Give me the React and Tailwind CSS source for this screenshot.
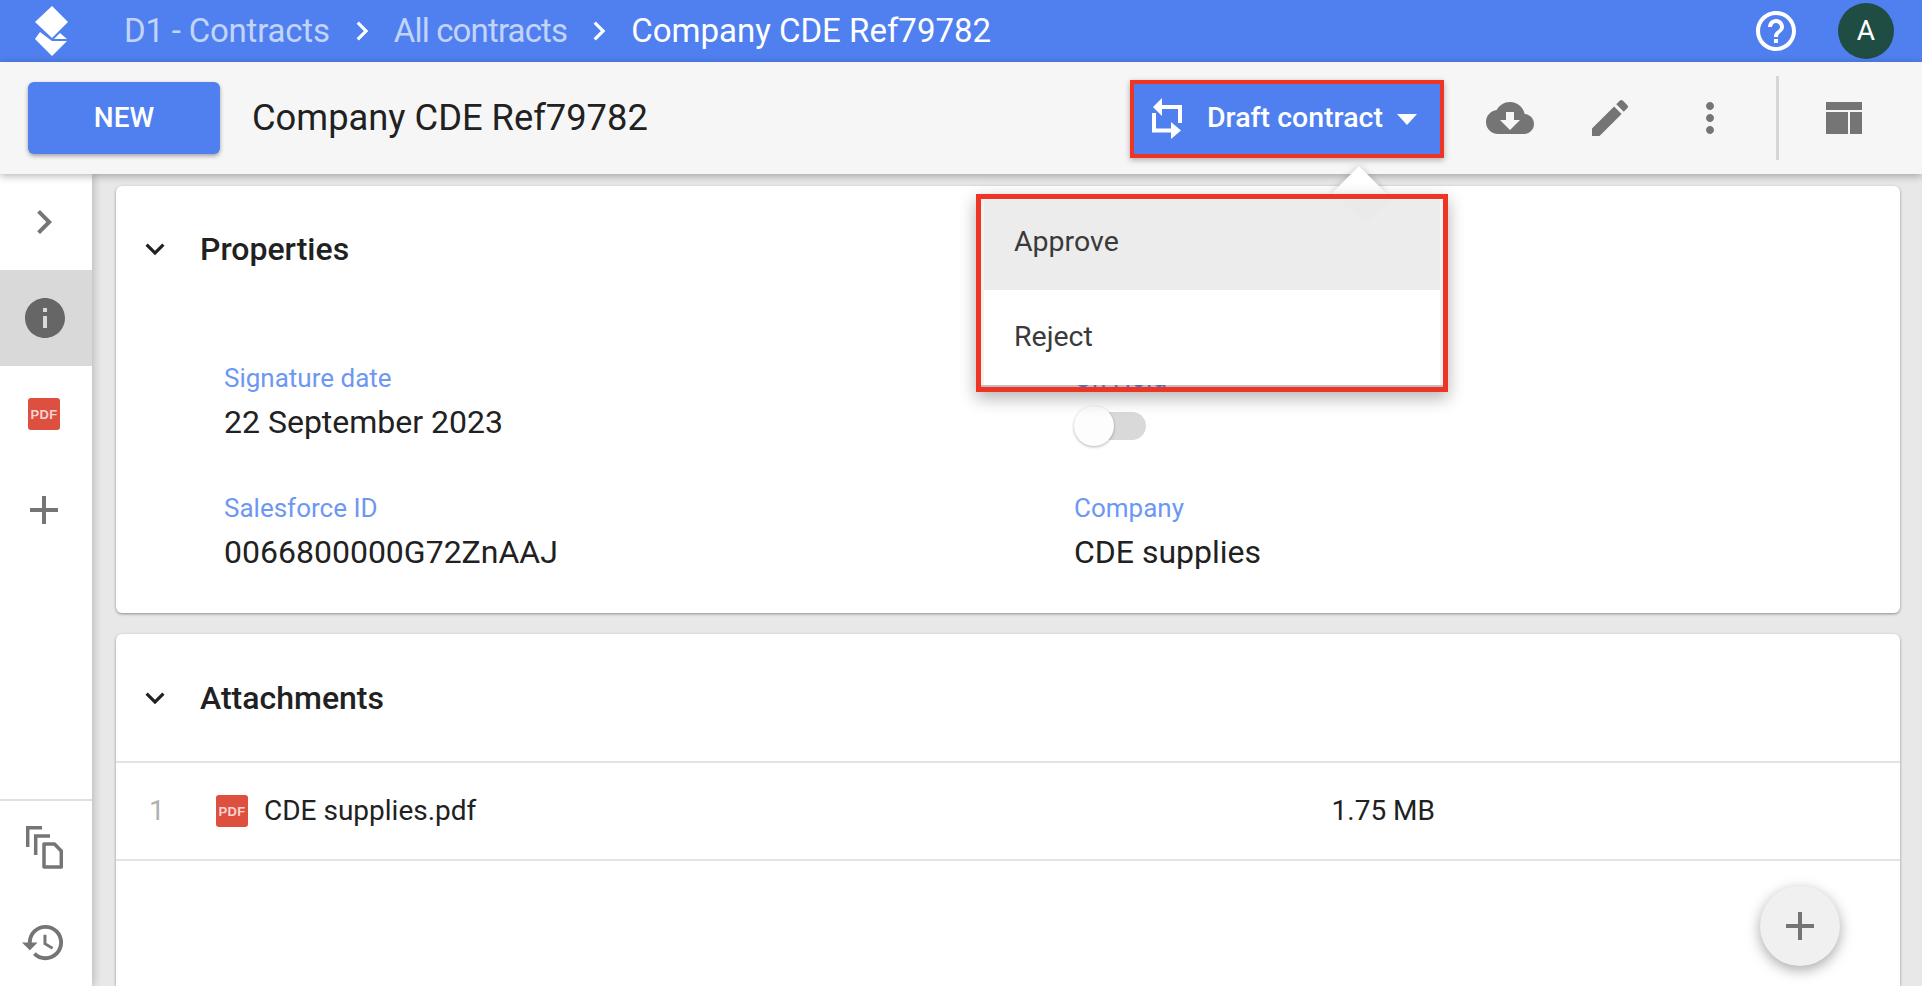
const R = "font-['Roboto',sans-serif]";

function I({ d, className }) {
  return (
    <svg viewBox="0 0 24 24" className={className} fill="currentColor">
      <path d={d} />
    </svg>
  );
}

const P = {
  info: "M12 2C6.48 2 2 6.48 2 12s4.48 10 10 10 10-4.48 10-10S17.52 2 12 2zm1 15h-2v-6h2v6zm0-8h-2V7h2v2z",
  right: "M10 6L8.59 7.41 13.17 12l-4.58 4.59L10 18l6-6z",
  more: "M16.59 8.59L12 13.17 7.41 8.59 6 10l6 6 6-6z",
  add: "M19 13h-6v6h-2v-6H5v-2h6V5h2v6h6v2z",
  cloud: "M19.35 10.04C18.67 6.59 15.64 4 12 4 9.11 4 6.6 5.64 5.35 8.04 2.34 8.36 0 10.91 0 14c0 3.31 2.69 6 6 6h13c2.76 0 5-2.24 5-5 0-2.64-2.05-4.78-4.65-4.96zM17 13l-5 5-5-5h3V9h4v4h3z",
  edit: "M3 17.25V21h3.75L17.81 9.94l-3.75-3.75L3 17.25zM20.71 7.04c.39-.39.39-1.02 0-1.41l-2.34-2.34c-.39-.39-1.02-.39-1.41 0l-1.83 1.83 3.75 3.75 1.83-1.83z",
  dots: "M12 8c1.1 0 2-.9 2-2s-.9-2-2-2-2 .9-2 2 .9 2 2 2zm0 2c-1.1 0-2 .9-2 2s.9 2 2 2 2-.9 2-2-.9-2-2-2zm0 6c-1.1 0-2 .9-2 2s.9 2 2 2 2-.9 2-2-.9-2-2-2z",
  help: "M11 18h2v-2h-2v2zm1-16C6.48 2 2 6.48 2 12s4.48 10 10 10 10-4.48 10-10S17.52 2 12 2zm0 18c-4.41 0-8-3.59-8-8s3.59-8 8-8 8 3.59 8 8-3.59 8-8 8zm0-14c-2.21 0-4 1.79-4 4h2c0-1.1.9-2 2-2s2 .9 2 2c0 2-3 1.75-3 5h2c0-2.25 3-2.5 3-5 0-2.21-1.79-4-4-4z",
  history: "M13 3a9 9 0 0 0-9 9H1l3.89 3.89.07.14L9 12H6c0-3.87 3.13-7 7-7s7 3.13 7 7-3.13 7-7 7c-1.93 0-3.68-.79-4.94-2.06l-1.42 1.42A8.954 8.954 0 0 0 13 21a9 9 0 0 0 0-18zm-1 5v5l4.28 2.54.72-1.21-3.5-2.08V8H12z",
};

function Pdf() {
  return (
    <div className="w-8 h-8 rounded-[3px] bg-[#dd4f3f] flex items-center justify-center shrink-0">
      <span className="text-[13px] leading-none font-bold text-[#f9d3ce] font-['Liberation_Sans',sans-serif] tracking-[0.3px]">PDF</span>
    </div>
  );
}

function Field({ label, value }) {
  return (
    <div className="flex flex-col">
      <span className="h-[32px] leading-[32px] text-[26px] text-[#6d97f3]">{label}</span>
      <span className="mt-[12px] h-[32px] leading-[32px] text-[32px] text-[#212121]">{value}</span>
    </div>
  );
}

function Head({ title, h }) {
  return (
    <div className={`${h} flex items-center pl-[20px]`}>
      <I d={P.more} className="w-[38px] h-[38px] text-[#212121]" />
      <span className="ml-[26px] text-[32px] font-medium text-[#212121]">{title}</span>
    </div>
  );
}

export default function App() {
  return (
    <div className={`${R} w-[1922px] h-[986px] overflow-hidden flex flex-col relative bg-[#e8e8e8]`}>
      {/* top bar */}
      <header className="h-[62px] shrink-0 bg-[#5080f0] flex items-center pl-[35px] pr-[28px] text-[33px] whitespace-nowrap">
        <svg viewBox="0 0 33 50" className="w-[33px] h-[50px] shrink-0 text-white" fill="currentColor">
          <path d="M17 0L33 16 17 32 0 16z" />
          <path d="M25 27L32 33H19z" />
          <path d="M0 33L5 26 17 35H32L17 50z" />
        </svg>
        <span className="ml-[56px] text-[#c3d4fa] tracking-[-0.2px]">D1 - Contracts</span>
        <I d={P.right} className="w-[38px] h-[38px] mx-[13px] text-white" />
        <span className="text-[#c3d4fa] tracking-[-0.85px]">All contracts</span>
        <I d={P.right} className="w-[38px] h-[38px] mx-[13px] text-white" />
        <span className="text-white">Company CDE Ref79782</span>
        <div className="ml-auto flex items-center gap-[38px]">
          <I d={P.help} className="w-[48px] h-[48px] text-white" />
          <div className="w-[56px] h-[56px] rounded-full bg-[#1f4d43] text-white text-[28px] flex items-center justify-center">A</div>
        </div>
      </header>

      {/* toolbar */}
      <div className="h-[112px] shrink-0 bg-[#f6f6f6] flex items-center pl-[28px] pr-[60px] shadow-[0_2px_8px_rgba(0,0,0,0.3)] relative z-10 whitespace-nowrap">
        <button className="w-[192px] h-[72px] shrink-0 rounded-[6px] bg-[#5080f0] text-white text-[28px] font-medium shadow-[0_2px_4px_rgba(0,0,0,0.35)]">NEW</button>
        <span className="ml-[32px] text-[36.3px] text-[#212121]">Company CDE Ref79782</span>
        <div className="ml-auto mt-[2px] w-[314px] h-[78px] shrink-0 border-4 border-[#ee3524] bg-[#5080f0] flex items-center pl-[17px] text-white shadow-[0_2px_6px_rgba(0,0,0,0.3)]">
          <svg viewBox="0 0 32 42" className="w-[32px] h-[42px] shrink-0" fill="currentColor">
            <path d="M2 9L11 0V7H31V25H27V11H11V18z" />
            <path d="M30 32.500L20 24V30.500H5V15H1V34.500H20V41z" />
          </svg>
          <span className="ml-[24px] mb-[2px] text-[28.5px] font-medium">Draft contract</span>
          <svg viewBox="0 0 20 11" className="ml-[14px] w-[20px] h-[11px]" fill="currentColor"><path d="M0 0h20L10 11z" /></svg>
        </div>
        <I d={P.cloud} className="ml-[42px] w-[48px] h-[48px] shrink-0 text-[#757575]" />
        <I d={P.edit} className="ml-[52px] w-[48px] h-[48px] shrink-0 text-[#757575]" />
        <I d={P.dots} className="ml-[52px] w-[48px] h-[48px] shrink-0 text-[#757575]" />
        <div className="ml-[42px] w-[3px] h-[84px] shrink-0 bg-[#d6d6d6]" />
        <svg viewBox="0 0 36 32" className="ml-[47px] w-[36px] h-[32px] shrink-0 text-[#757575]" fill="currentColor">
          <path d="M0 0h36v8H0zM0 10h22v22H0zM24 10h12v22H24z" />
        </svg>
      </div>

      <div className="flex-1 flex min-h-0">
        {/* sidebar */}
        <aside className="w-[92px] shrink-0 bg-white flex flex-col items-stretch text-[#757575] shadow-[2px_0_8px_rgba(0,0,0,0.2)] relative">
          <div className="h-[96px] pr-[5px] flex items-center justify-center">
            <I d={P.right} className="w-[48px] h-[48px]" />
          </div>
          <div className="h-[96px] pr-[3px] bg-[#d9d9d9] flex items-center justify-center">
            <I d={P.info} className="w-[48px] h-[48px] text-[#666666]" />
          </div>
          <div className="h-[96px] pr-[4px] flex items-center justify-center"><Pdf /></div>
          <div className="h-[96px] pr-[4px] flex items-center justify-center">
            <I d={P.add} className="w-[48px] h-[48px]" />
          </div>
          <div className="mt-auto border-t-2 border-[#e0e0e0] h-[187px] flex flex-col items-start">
            <svg viewBox="0 0 37 43" className="ml-[26px] mt-[25px] w-[37px] h-[43px]" fill="none" stroke="currentColor" strokeWidth="3.500">
              <path d="M1.700 21V1.700H16" />
              <path d="M9.700 29V10H24" />
              <path d="M18 18H28.500L35.300 25V41H18z" strokeLinejoin="round" />
            </svg>
            <I d={P.history} className="ml-[20px] mt-[50px] w-[47px] h-[47px]" />
          </div>
        </aside>

        {/* main */}
        <main className="flex-1 min-w-0 pt-[12px] pl-[24px] pr-[22px] flex flex-col gap-[21px]">
          <section className="h-[427px] shrink-0 bg-white rounded-[6px] shadow-[0_1px_3px_rgba(0,0,0,0.4)]">
            <Head title="Properties" h="h-[126px]" />
            <div className="grid grid-cols-[850px_1fr] pl-[108px] pt-[50px] gap-y-[46px]">
              <Field label="Signature date" value="22 September 2023" />
              <div className="flex flex-col">
                <span className="h-[32px] leading-[32px] text-[26px] text-[#6d97f3]">On Hold</span>
                <div className="mt-[12px] relative w-[72px] h-[40px] flex items-center">
                  <div className="absolute left-[8px] right-0 h-[28px] rounded-full bg-[#d9d9d9]" />
                  <div className="absolute left-0 w-[40px] h-[40px] rounded-full bg-[#fdfdfd] shadow-[0_1px_3px_rgba(0,0,0,0.3)]" />
                </div>
              </div>
              <Field label="Salesforce ID" value="0066800000G72ZnAAJ" />
              <Field label="Company" value="CDE supplies" />
            </div>
          </section>

          <section className="flex-1 bg-white rounded-t-[6px] shadow-[0_1px_3px_rgba(0,0,0,0.4)] relative">
            <Head title="Attachments" h="h-[127px]" />
            <div className="h-[100px] border-y-2 border-[#e3e3e3] flex items-center pl-[33px]">
              <span className="w-[67px] text-[28px] text-[#b0b0b0]">1</span>
              <Pdf />
              <span className="ml-[16px] text-[28px] text-[#212121]">CDE supplies.pdf</span>
              <span className="ml-auto mr-[465px] text-[28px] text-[#212121]">1.75 MB</span>
            </div>
            <div className="absolute left-[1644px] top-[252px] w-[80px] h-[80px] rounded-full bg-[#f0f0f0] shadow-[0_4px_14px_rgba(0,0,0,0.35)] flex items-center justify-center text-[#757575]">
              <I d={P.add} className="w-[48px] h-[48px]" />
            </div>
          </section>
        </main>
      </div>

      {/* popup */}
      <svg viewBox="0 0 56 28" className="absolute left-[1331px] top-[166px] w-[56px] h-[28px] z-20 text-white drop-shadow-[0_0_3px_rgba(0,0,0,0.2)]" fill="currentColor">
        <path d="M28 0L56 28H0z" />
      </svg>
      <div className="absolute left-[976px] top-[194px] w-[472px] h-[198px] border-[5px] border-[#ee3524] z-20 shadow-[0_6px_16px_rgba(0,0,0,0.3)]">
        <div className="relative w-full h-[186px] border-x-[3px] border-t-[1px] border-[#f3f3f3] text-[28.5px] text-[#3a3a3a] shadow-[0_2px_0_rgba(0,0,0,0.25)]">
          <div className="h-[90px] bg-[#ececec] flex items-center pl-[30px] pb-[6px]">Approve</div>
          <div className="h-[95px] bg-white flex items-center pl-[30px]">Reject</div>
          <svg viewBox="0 0 50 23" className="absolute left-[356px] top-0 w-[50px] h-[23px] text-[#eaeaea]" fill="currentColor">
            <path d="M0 0H50L25 23z" />
          </svg>
        </div>
      </div>
    </div>
  );
}
